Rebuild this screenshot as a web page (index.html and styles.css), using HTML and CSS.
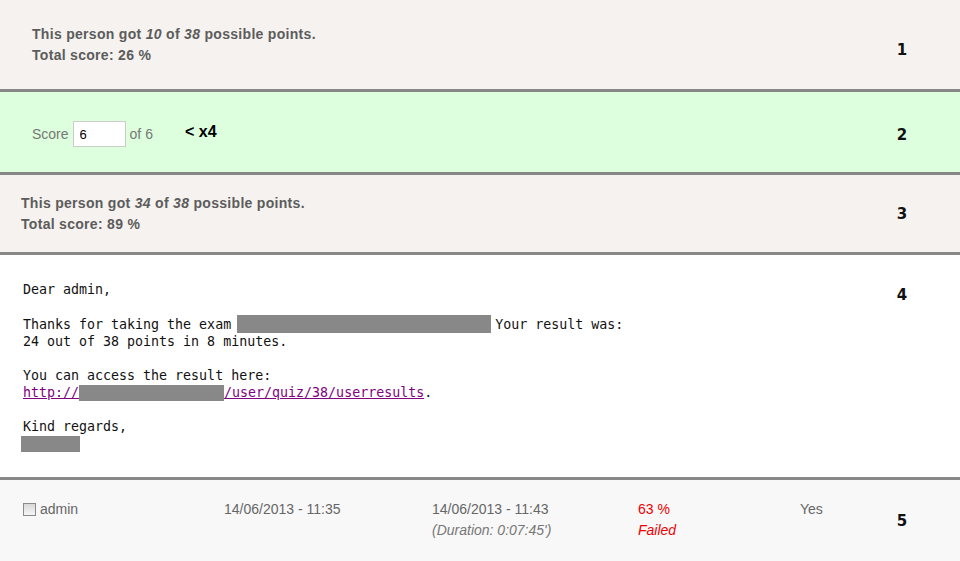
FILE: index.html
```html
<!DOCTYPE html>
<html lang="en">
<head>
    <meta charset="UTF-8">
    <title>Quiz results</title>
    <link rel="stylesheet" href="styles.css">
</head>
<body>
    <!-- 1: summary -->
    <div class="panel panel-summary first">
        <div class="panel-body pad-wide">
            <p>This person got <em>10</em> of <em>38</em> possible points.</p>
            <p>Total score: 26 %</p>
        </div>
        <div class="num">1</div>
    </div>

    <!-- 2: score input -->
    <div class="panel panel-score">
        <div class="panel-body pad-wide score-row">
            <label for="score">Score</label>
            <input type="text" id="score" class="score-input" value="6">
            <span>of 6</span>
            <b class="times">&lt; x4</b>
        </div>
        <div class="num">2</div>
    </div>

    <!-- 3: summary -->
    <div class="panel panel-summary third">
        <div class="panel-body pad-narrow">
            <p>This person got <em>34</em> of <em>38</em> possible points.</p>
            <p>Total score: 89 %</p>
        </div>
        <div class="num">3</div>
    </div>

    <!-- 4: mail -->
    <div class="panel panel-mail">
        <pre class="panel-body mail">Dear admin,

Thanks for taking the exam<span class="redact exam"></span>Your result was:
24 out of 38 points in 8 minutes.

You can access the result here:
<a href="#">http://<span class="redact host"></span>/user/quiz/38/userresults</a>.

Kind regards,
<span class="redact sign"></span></pre>
        <div class="num">4</div>
    </div>

    <!-- 5: results row -->
    <div class="panel panel-row">
        <div class="panel-body result-row">
            <div><label><input type="checkbox" class="check">admin</label></div>
            <div>14/06/2013 - 11:35</div>
            <div>14/06/2013 - 11:43<br><i class="note">(Duration: 0:07:45')</i></div>
            <div class="failed">63 %<br><i>Failed</i></div>
            <div>Yes</div>
        </div>
        <div class="num">5</div>
    </div>
</body>
</html>
```

FILE: styles.css
```css
body { margin: 0; font-family: "Liberation Sans", Arial, sans-serif; background: #fff; }

.panel {
    display: flex;
    align-items: center;
    border-bottom: 3px solid #888;
}

.panel:last-child { border-bottom: none; }

.panel-body { flex: 1; }

/* number label on the right side */
.num {
    width: 84px;
    margin-right: 16px;
    text-align: center;
    font-family: "DejaVu Sans", sans-serif;
    font-weight: bold;
    font-size: 15px;
    color: #111;
}

/* Summary panels */
.panel-summary {
    background: #f5f2ef;
    color: #5c5c5c;
    font-size: 14px;
    font-weight: bold;
    letter-spacing: 0.3px;
}

.panel-summary.first { height: 89px; }
.panel-summary.first .num { margin-top: 10px; }
.panel-summary.third { height: 77px; }

.panel-summary p { margin: 0; line-height: 21px; }

.pad-wide { padding-left: 32px; }
.pad-narrow { padding-left: 21px; }

/* Score panel */
.panel-score {
    background: #ddffdd;
    height: 80px;
}

.panel-score .num { margin-top: 5px; }

.score-row {
    display: flex;
    align-items: center;
    gap: 4px;
    padding-top: 4px;
    font-size: 14px;
    color: #777;
}

.score-input {
    width: 45px;
    height: 24px;
    padding: 0 0 0 6px;
    margin: 0;
    border: 1px solid #ccc;
    font-family: "Liberation Sans", Arial, sans-serif;
    font-size: 13px;
    color: #000;
}

.times {
    margin-left: 28px;
    margin-top: -4px;
    font-size: 16px;
    color: #000;
}

/* Mail panel */
.panel-mail {
    background: #fff;
    align-items: flex-start;
    height: 222px;
}

.panel-mail .num { padding-top: 31px; }

.mail {
    margin: 0;
    padding: 26px 0 0 23px;
    font-family: "DejaVu Sans Mono", "Liberation Mono", monospace;
    font-size: 13.3px;
    line-height: 17px;
    color: #111;
}

.mail a { color: #800080; }

.redact {
    display: inline-block;
    background: #888;
    vertical-align: -4px;
}

.redact.exam { width: 254px; height: 18px; margin: 0 4px 0 6px; }
.redact.host { width: 145px; height: 16px; }
.redact.sign { width: 59px; height: 16px; margin-left: -2px; }

/* Result row */
.panel-row {
    background: #f8f8f8;
    height: 81px;
}

.result-row {
    display: grid;
    grid-template-columns: 202px 208px 206px 162px 1fr;
    padding-left: 22px;
    margin-top: -2px;
    font-size: 14px;
    line-height: 21px;
    color: #666;
}

.check {
    appearance: none;
    width: 13px;
    height: 13px;
    margin: 0 4px 0 1px;
    vertical-align: -2px;
    border: 1px solid #8a8a8a;
    background: linear-gradient(#d8d8d8, #f6f6f6);
}

.note { color: #777; }

.failed { color: #e00; }
```
